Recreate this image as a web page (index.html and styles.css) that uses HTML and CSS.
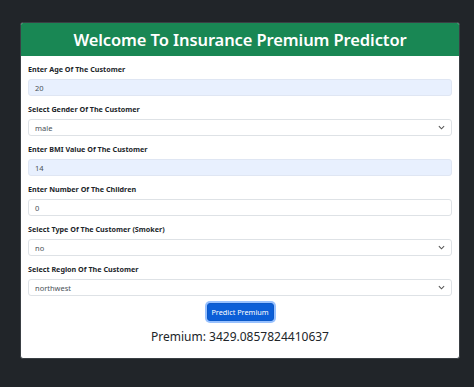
FILE: index.html
```html
<!DOCTYPE html>
<html>
<head>
<meta charset="utf-8">
<link rel="stylesheet" href="styles.css">
</head>
<body>
<div class="card">
  <div class="card-header">Welcome To Insurance Premium Predictor</div>
  <div class="card-body">
    <div class="group">
      <label class="label">Enter Age Of The Customer</label>
      <div class="input autofill">20</div>
    </div>
    <div class="group">
      <label class="label">Select Gender Of The Customer</label>
      <div class="input select">male<svg class="chev" viewBox="0 0 8 5" width="7" height="5"><path d="M1 1l3 3 3-3" fill="none" stroke="#555" stroke-width="1.2"/></svg></div>
    </div>
    <div class="group">
      <label class="label">Enter BMI Value Of The Customer</label>
      <div class="input autofill">14</div>
    </div>
    <div class="group">
      <label class="label">Enter Number Of The Children</label>
      <div class="input">0</div>
    </div>
    <div class="group">
      <label class="label">Select Type Of The Customer (Smoker)</label>
      <div class="input select">no<svg class="chev" viewBox="0 0 8 5" width="7" height="5"><path d="M1 1l3 3 3-3" fill="none" stroke="#555" stroke-width="1.2"/></svg></div>
    </div>
    <div class="group">
      <label class="label">Select Region Of The Customer</label>
      <div class="input select">northwest<svg class="chev" viewBox="0 0 8 5" width="7" height="5"><path d="M1 1l3 3 3-3" fill="none" stroke="#555" stroke-width="1.2"/></svg></div>
    </div>
    <div class="actions">
      <button class="btn">Predict Premium</button>
    </div>
    <div class="result">Premium: 3429.0857824410637</div>
  </div>
</div>
</body>
</html>
```
FILE: styles.css
```css
* { box-sizing: border-box; }
html, body { margin: 0; padding: 0; }
body {
  background: #212529;
  font-family: "Noto Sans", "Open Sans", sans-serif;
  width: 474px;
  height: 387px;
  overflow: hidden;
  padding: 22px 14px 0 20px;
}
.card {
  width: 440px;
  background: #fff;
  border-radius: 3px;
  overflow: hidden;
  border: 1px solid #3a3f44;
}
.card-header {
  background: #198754;
  color: #fff;
  height: 33px;
  display: flex;
  align-items: center;
  justify-content: center;
  font-size: 16.5px;
  font-weight: 600;
  letter-spacing: -0.1px;
}
.card-body {
  padding: 7px 7px 12px 7px;
}
.group {
  display: flex;
  flex-direction: column;
  margin-bottom: 7px;
}
.label {
  font-size: 7.2px;
  font-weight: 700;
  color: #212529;
  height: 12px;
  line-height: 12px;
  margin-bottom: 4px;
}
.input {
  height: 17px;
  border: 1px solid #dee2e6;
  border-radius: 3px;
  padding: 0 6px;
  font-size: 7.5px;
  color: #495057;
  display: flex;
  align-items: center;
  justify-content: space-between;
  background: #fff;
}
.input.autofill { background: #e8f0fe; border-color: #dfe6f3; }
.chev { display: block; }
.actions {
  display: flex;
  justify-content: center;
  margin-top: 1px;
}
.btn {
  background: #0b5ed7;
  color: #fff;
  border: 1px solid #0a58ca;
  border-radius: 3px;
  height: 18px;
  width: 67px;
  font-family: inherit;
  font-size: 7.3px;
  padding: 0;
  box-shadow: 0 0 0 2px rgba(49,132,253,0.5);
}
.result {
  text-align: center;
  font-size: 12px;
  color: #212529;
  height: 18px;
  line-height: 18px;
  margin-top: 7px;
}
```
